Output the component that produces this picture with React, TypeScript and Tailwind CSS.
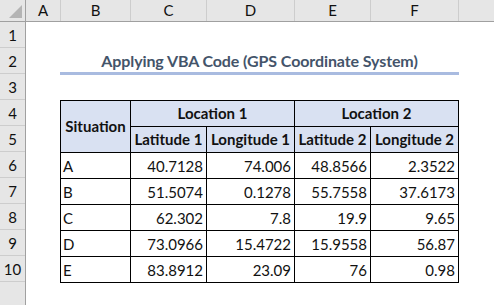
import React from "react";

const cols = [
  { name: "A", w: "w-[35px]" },
  { name: "B", w: "w-[70px]" },
  { name: "C", w: "w-[76px]" },
  { name: "D", w: "w-[88px]" },
  { name: "E", w: "w-[76px]" },
  { name: "F", w: "w-[88px]" },
];

const data = [
  ["A", "40.7128", "74.006", "48.8566", "2.3522"],
  ["B", "51.5074", "0.1278", "55.7558", "37.6173"],
  ["C", "62.302", "7.8", "19.9", "9.65"],
  ["D", "73.0966", "15.4722", "15.9558", "56.87"],
  ["E", "83.8912", "23.09", "76", "0.98"],
];

const App = () => {
  return (
    <div className="w-[494px] h-[305px] overflow-hidden bg-white text-[#111] font-['Lato','Liberation_Sans',sans-serif]">
      {/* column letters */}
      <div className="flex h-[22px] bg-[#e6e6e6] border-b border-[#a0a0a0]">
        <div className="relative w-[26px] shrink-0 border-r border-[#a0a0a0]">
          <div className="absolute right-[3px] bottom-[3px] w-0 h-0 border-l-[13px] border-l-transparent border-b-[13px] border-b-[#b4b4b4]" />
        </div>
        {cols.map((c) => (
          <div
            key={c.name}
            className={`${c.w} shrink-0 border-r border-[#cdcdcd] flex items-center justify-center text-[15px]`}
          >
            {c.name}
          </div>
        ))}
        <div className="flex-1" />
      </div>

      <div className="flex">
        {/* row numbers */}
        <div className="w-[26px] shrink-0 h-[283px] bg-[#e6e6e6] border-r border-[#a0a0a0]">
          {[1, 2, 3, 4, 5, 6, 7, 8, 9, 10].map((n) => (
            <div
              key={n}
              className="h-[26px] border-b border-[#cdcdcd] flex items-center justify-center text-[15px] pt-[2px]"
            >
              {n}
            </div>
          ))}
        </div>

        {/* sheet body */}
        <div className="flex-1 flex flex-col">
          <div className="h-[26px]" />
          <div className="ml-[34px] w-[399px] h-[27px] border-b-[3px] border-[#a9bbe0] flex items-end justify-center">
            <span className="text-[16px] font-bold text-[#44546a] leading-[22px] tracking-[-0.1px]">
              Applying VBA Code (GPS Coordinate System)
            </span>
          </div>
          <div className="h-[25px]" />

          <div className="ml-[34px] w-[399px] grid grid-cols-[69px_75px_87px_75px_87px] grid-rows-[repeat(7,25px)] gap-px bg-black p-px text-[15px]">
            <div className="row-span-2 bg-[#d9e1f2] font-bold flex items-center justify-center">
              Situation
            </div>
            <div className="col-span-2 bg-[#d9e1f2] font-bold flex items-center justify-center">
              Location 1
            </div>
            <div className="col-span-2 bg-[#d9e1f2] font-bold flex items-center justify-center">
              Location 2
            </div>
            {["Latitude 1", "Longitude 1", "Latitude 2", "Longitude 2"].map((h) => (
              <div key={h} className="bg-[#d9e1f2] font-bold flex items-center justify-center">
                {h}
              </div>
            ))}
            {data.map((row) =>
              row.map((v, i) => (
                <div
                  key={row[0] + i}
                  className={`bg-white flex items-center pt-[2px] ${i === 0 ? "pl-[2px]" : "justify-end pr-[3px]"}`}
                >
                  {v}
                </div>
              ))
            )}
          </div>
        </div>
      </div>
    </div>
  );
};

export default App;
